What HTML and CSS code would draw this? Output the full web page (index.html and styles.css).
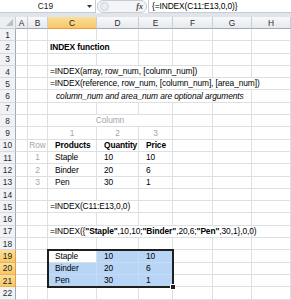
FILE: index.html
```html
<!DOCTYPE html>
<html lang="en">

<head>
    <meta charset="UTF-8">
    <meta name="viewport" content="width=device-width, initial-scale=1.0">
    <title>INDEX function</title>
    <link rel="stylesheet" href="styles.css">
</head>

<body>
    <div class="formula-bar">
        <div class="name-box">
            <span class="name">C19</span>
            <svg class="drop" width="5" height="3" viewBox="0 0 5 3"><path d="M0 0h5L2.5 3z" fill="#333"/></svg>
        </div>
        <div class="fx-box">
            <span class="knob"></span>
            <span class="fx">fx</span>
        </div>
        <div class="formula">{=INDEX(C11:E13,0,0)}</div>
    </div>

    <div class="sheet" id="sheet">
        <!-- Cells are built by the script below -->
    </div>

    <script>
        const columns = ['A', 'B', 'C', 'D', 'E', 'F', 'G', 'H'];
        const rowCount = 22;
        const selectedColumn = 'C';
        const selectedRows = [19, 20, 21];

        // cell content by row, then column
        const data = {
            2: { C: { text: 'INDEX function', span: 2, cls: 'bold' } },
            4: { C: { text: '=INDEX(array, row_num, [column_num])', span: 4 } },
            5: { C: { text: '=INDEX(reference, row_num, [column_num], [area_num])', span: 6 } },
            6: { C: { text: 'column_num and area_num are optional arguments', span: 5, cls: 'italic indent' } },
            8: { C: { text: 'Column', span: 3, cls: 'muted center' } },
            9: {
                C: { text: '1', cls: 'muted center' },
                D: { text: '2', cls: 'muted center' },
                E: { text: '3', cls: 'muted center' }
            },
            10: {
                B: { text: 'Row', cls: 'muted center' },
                C: { text: 'Products', cls: 'bold pad' },
                D: { text: 'Quantity', cls: 'bold pad' },
                E: { text: 'Price', cls: 'bold pad' }
            },
            11: {
                B: { text: '1', cls: 'muted center' },
                C: { text: 'Staple', cls: 'pad' },
                D: { text: '10', cls: 'pad' },
                E: { text: '10', cls: 'pad' }
            },
            12: {
                B: { text: '2', cls: 'muted center' },
                C: { text: 'Binder', cls: 'pad' },
                D: { text: '20', cls: 'pad' },
                E: { text: '6', cls: 'pad' }
            },
            13: {
                B: { text: '3', cls: 'muted center' },
                C: { text: 'Pen', cls: 'pad' },
                D: { text: '30', cls: 'pad' },
                E: { text: '1', cls: 'pad' }
            },
            15: { C: { text: '=INDEX(C11:E13,0,0)', span: 2 } },
            17: { C: { html: '=INDEX({<b>"Staple"</b>,10,10;<b>"Binder"</b>,20,6;<b>"Pen"</b>,30,1},0,0)', span: 5 } },
            19: {
                C: { text: 'Staple', cls: 'pad' },
                D: { text: '10', cls: 'pad sel' },
                E: { text: '10', cls: 'pad sel' }
            },
            20: {
                C: { text: 'Binder', cls: 'pad sel' },
                D: { text: '20', cls: 'pad sel' },
                E: { text: '6', cls: 'pad sel' }
            },
            21: {
                C: { text: 'Pen', cls: 'pad sel' },
                D: { text: '30', cls: 'pad sel' },
                E: { text: '1', cls: 'pad sel' }
            }
        };

        const sheet = document.getElementById('sheet');

        function addCell(className, text) {
            const cell = document.createElement('div');
            cell.className = className;
            if (text) cell.textContent = text;
            sheet.appendChild(cell);
            return cell;
        }

        // header row
        addCell('corner');
        columns.forEach(col => {
            const hdr = addCell('col-hdr', col);
            if (col === selectedColumn) hdr.classList.add('hdr-on');
        });

        // body rows
        for (let r = 1; r <= rowCount; r++) {
            const hdr = addCell('row-hdr', String(r));
            if (selectedRows.includes(r)) hdr.classList.add('hdr-on');

            const row = data[r] || {};
            let skip = 0;
            columns.forEach(col => {
                if (skip > 0) {
                    skip--;
                    return;
                }
                const item = row[col];
                const cell = addCell('cell' + (item && item.cls ? ' ' + item.cls : ''));
                if (!item) return;
                if (item.html) cell.innerHTML = item.html;
                else cell.textContent = item.text;
                if (item.span) {
                    cell.style.gridColumn = 'span ' + item.span;
                    skip = item.span - 1;
                }
            });
        }

        // selection border C19:E21
        const selection = document.createElement('div');
        selection.className = 'selection';
        selection.innerHTML = '<span class="fill-handle"></span>';
        sheet.appendChild(selection);
    </script>
</body>

</html>
```

FILE: styles.css
```css
body {
    margin: 0;
    padding: 0;
    width: 291px;
    height: 300px;
    overflow: hidden;
    background-color: #fff;
    font-family: "Liberation Sans", Arial, sans-serif;
    font-size: 8.4px;
    color: #000;
}

/* formula bar */

.formula-bar {
    display: flex;
    height: 13px;
    border-bottom: 4px solid #e1e5ea;
    background-color: #fff;
}

.name-box {
    width: 96px;
    display: flex;
    align-items: center;
    border-right: 1px solid #c7ccd3;
    border-bottom: 1px solid #c7ccd3;
    box-sizing: border-box;
}

.name {
    flex: 1;
    text-align: center;
    padding-left: 4px;
    color: #222;
}

.drop {
    margin-right: 3px;
}

.fx-box {
    width: 50px;
    display: flex;
    align-items: center;
    justify-content: space-between;
    padding: 0 3px 0 2px;
    box-sizing: border-box;
    background-color: #f3f5f8;
    border: 1px solid #c5ccd6;
    border-radius: 6px;
    margin: 0 1px;
}

.knob {
    width: 9px;
    height: 9px;
    border-radius: 50%;
    border: 1px solid #cdd3da;
    background-color: #e9edf2;
    box-sizing: border-box;
}

.fx {
    font-family: "Liberation Serif", serif;
    font-style: italic;
    font-weight: bold;
    font-size: 8px;
    color: #444;
}

.formula {
    flex: 1;
    display: flex;
    align-items: center;
    padding-left: 3px;
    border-left: 1px solid #c5ccd6;
    border-bottom: 1px solid #c7ccd3;
    letter-spacing: -0.1px;
}

/* sheet */

.sheet {
    position: relative;
    display: grid;
    grid-template-columns: 16px 12px 20px 49px 42px 34px 40px 39px 39px;
    grid-template-rows: 12px repeat(22, 12.3px);
}

.corner,
.col-hdr,
.row-hdr {
    box-sizing: border-box;
    display: flex;
    align-items: center;
    justify-content: center;
    color: #2b2b2b;
    background: linear-gradient(#f8f9fa, #e6e9ed);
    border-right: 1px solid #c8ced6;
    border-bottom: 1px solid #c8ced6;
}

.corner {
    position: relative;
    background: #eceff2;
}

.corner::after {
    content: "";
    position: absolute;
    right: 2px;
    bottom: 2px;
    border-left: 7px solid transparent;
    border-bottom: 7px solid #b9bfc7;
}

.col-hdr {
    border-bottom-color: #9eabba;
}

.row-hdr {
    background: #f0f2f4;
    border-right-color: #9eabba;
    border-bottom-color: #d5dae0;
}

.hdr-on {
    background: linear-gradient(#fbdf9c, #f5c866);
    color: #222;
}

.col-hdr.hdr-on {
    border-bottom-color: #ef9a3c;
}

.row-hdr.hdr-on {
    border-right-color: #ef9a3c;
    border-bottom-color: #e8b35a;
}

.cell {
    box-sizing: border-box;
    display: flex;
    align-items: flex-end;
    padding: 0 2px 1px;
    line-height: 10px;
    white-space: nowrap;
    letter-spacing: -0.1px;
    border-right: 1px solid #dde0e3;
    border-bottom: 1px solid #dde0e3;
}

.bold,
.cell b {
    font-weight: bold;
}

.italic {
    font-style: italic;
}

.indent {
    padding-left: 8px;
}

.pad {
    padding-left: 7px;
}

.center {
    justify-content: center;
}

.muted {
    color: #a6a6a6;
}

.sel {
    background-color: #b9d5f5;
    border-color: #c6dcf5;
}

.selection {
    position: absolute;
    grid-area: 20 / 4 / 23 / 7;
    top: -1px;
    left: -1px;
    right: -1px;
    bottom: -1px;
    border: 2px solid #1f1f1f;
}

.fill-handle {
    position: absolute;
    right: -4px;
    bottom: -4px;
    width: 4px;
    height: 4px;
    background-color: #1f1f1f;
    border: 1px solid #fff;
}
```
